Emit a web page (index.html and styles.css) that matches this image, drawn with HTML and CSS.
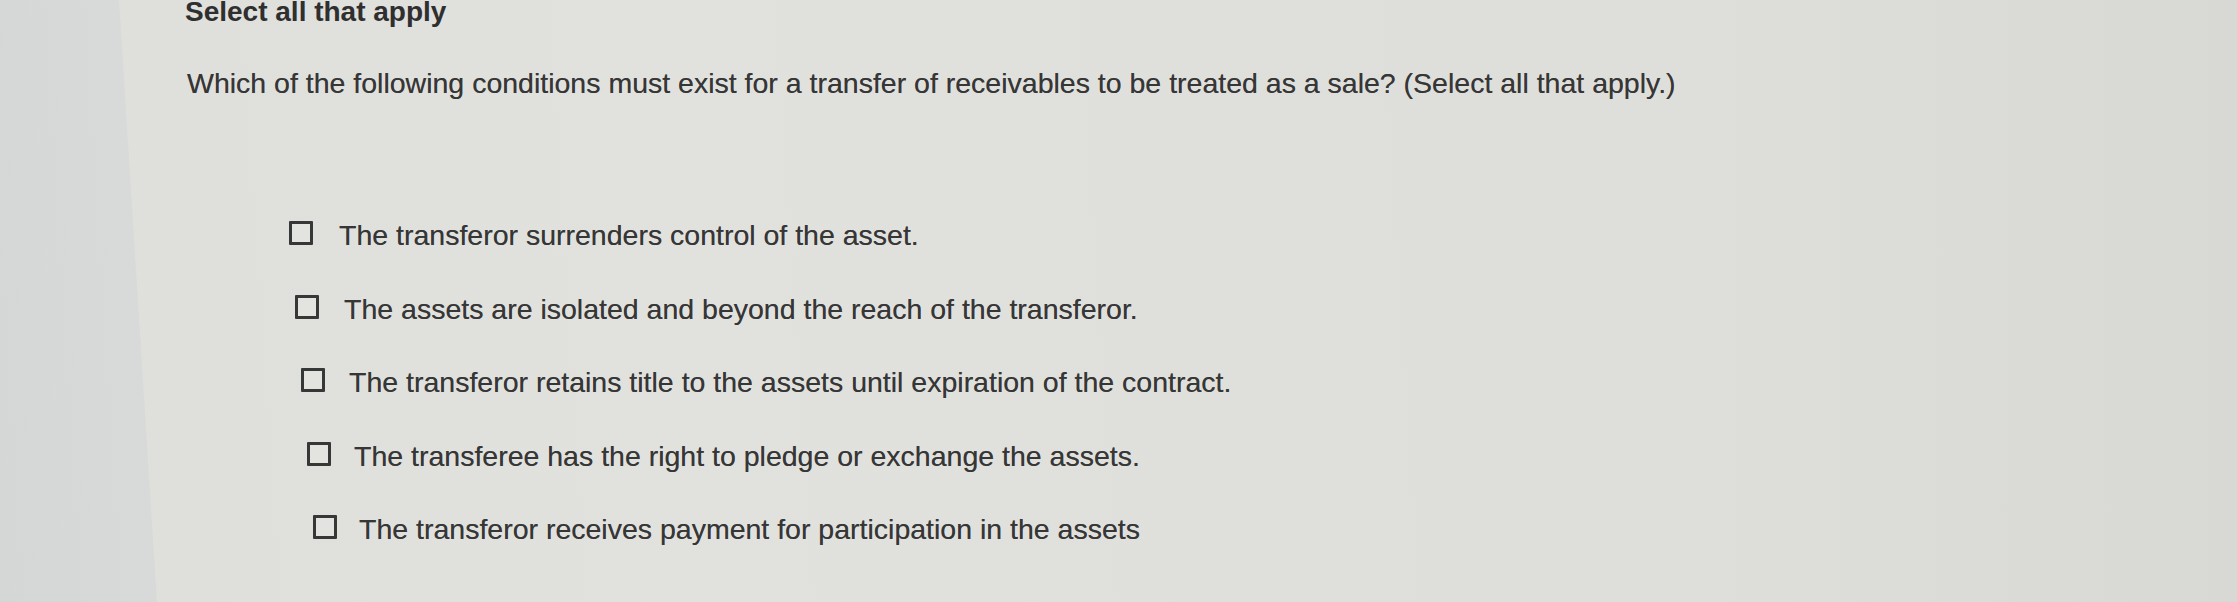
FILE: index.html
```html
<!DOCTYPE html>
<html lang="en">
<head>
<meta charset="utf-8">
<title>Select all that apply</title>
<link rel="stylesheet" href="styles.css">
</head>
<body>
<main class="page">
  <h2 class="heading">Select all that apply</h2>
  <p class="question">Which of the following conditions must exist for a transfer of receivables to be treated as a sale? (Select all that apply.)</p>
  <ul class="options">
    <li class="option"><span class="box"></span><span class="label">The transferor surrenders control of the asset.</span></li>
    <li class="option"><span class="box"></span><span class="label">The assets are isolated and beyond the reach of the transferor.</span></li>
    <li class="option"><span class="box"></span><span class="label">The transferor retains title to the assets until expiration of the contract.</span></li>
    <li class="option"><span class="box"></span><span class="label">The transferee has the right to pledge or exchange the assets.</span></li>
    <li class="option"><span class="box"></span><span class="label">The transferor receives payment for participation in the assets</span></li>
  </ul>
</main>
</body>
</html>
```
FILE: styles.css
```css
html, body {
  margin: 0;
  padding: 0;
}
body {
  width: 2237px;
  height: 602px;
  overflow: hidden;
  font-family: "Liberation Sans", Arial, sans-serif;
  color: #363636;
  background:
    linear-gradient(90deg, rgba(0,0,0,0) 0, rgba(0,0,0,0) 1700px, rgba(120,125,120,0.06) 2237px),
    linear-gradient(86.4deg, #d4d7d5 0, #d7dad8 156px, #dfdfdc 157px, #e1e1de 700px, #dededb 1500px);
}
.page {
  padding-left: 185px;
}
.heading {
  margin: -2px 0 0;
  font-size: 28px;
  line-height: 28px;
  font-weight: 700;
  color: #2f2f2f;
}
.question {
  margin: 40px 0 0 2px;
  font-size: 28.5px;
  line-height: 34px;
  text-shadow: 0 0 0.6px rgba(40,40,40,0.6);
}
.options {
  list-style: none;
  margin: 118px 0 0;
  padding: 0 0 0 104px;
  display: flex;
  flex-direction: column;
  gap: 39.5px;
}
.option {
  display: flex;
  align-items: baseline;
  gap: 26px;
  font-size: 28.5px;
  line-height: 34px;
  text-shadow: 0 0 0.6px rgba(40,40,40,0.6);
}
.option:nth-child(2) { margin-left: 6px; gap: 25px; }
.option:nth-child(3) { margin-left: 12px; gap: 24px; }
.option:nth-child(4) { margin-left: 18px; gap: 23px; }
.option:nth-child(5) { margin-left: 24px; gap: 22px; }
.box {
  flex: none;
  width: 24px;
  height: 24px;
  box-sizing: border-box;
  border: 3px solid #363838;
  background: #e3e3e0;
  border-radius: 1px;
}
.label {
  white-space: nowrap;
}
```
